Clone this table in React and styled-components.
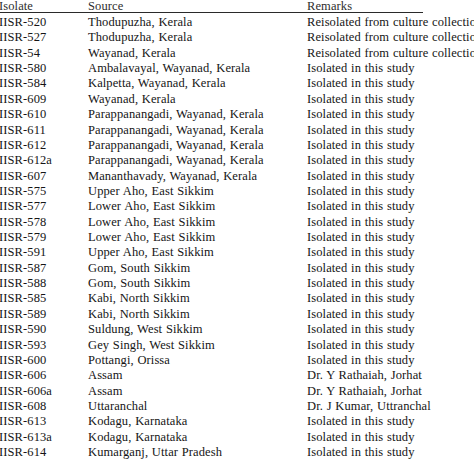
import React from 'react';
import styled, { createGlobalStyle } from 'styled-components';

const GlobalStyle = createGlobalStyle`
  html, body { margin: 0; padding: 0; background: #fff; }
  body { overflow: hidden; width: 474px; height: 459px; }
`;

const rows = [
  ['IISR-520', 'Thodupuzha, Kerala', 'Reisolated from culture collection'],
  ['IISR-527', 'Thodupuzha, Kerala', 'Reisolated from culture collection'],
  ['IISR-54', 'Wayanad, Kerala', 'Reisolated from culture collection'],
  ['IISR-580', 'Ambalavayal, Wayanad, Kerala', 'Isolated in this study'],
  ['IISR-584', 'Kalpetta, Wayanad, Kerala', 'Isolated in this study'],
  ['IISR-609', 'Wayanad, Kerala', 'Isolated in this study'],
  ['IISR-610', 'Parappanangadi, Wayanad, Kerala', 'Isolated in this study'],
  ['IISR-611', 'Parappanangadi, Wayanad, Kerala', 'Isolated in this study'],
  ['IISR-612', 'Parappanangadi, Wayanad, Kerala', 'Isolated in this study'],
  ['IISR-612a', 'Parappanangadi, Wayanad, Kerala', 'Isolated in this study'],
  ['IISR-607', 'Mananthavady, Wayanad, Kerala', 'Isolated in this study'],
  ['IISR-575', 'Upper Aho, East Sikkim', 'Isolated in this study'],
  ['IISR-577', 'Lower Aho, East Sikkim', 'Isolated in this study'],
  ['IISR-578', 'Lower Aho, East Sikkim', 'Isolated in this study'],
  ['IISR-579', 'Lower Aho, East Sikkim', 'Isolated in this study'],
  ['IISR-591', 'Upper Aho, East Sikkim', 'Isolated in this study'],
  ['IISR-587', 'Gom, South Sikkim', 'Isolated in this study'],
  ['IISR-588', 'Gom, South Sikkim', 'Isolated in this study'],
  ['IISR-585', 'Kabi, North Sikkim', 'Isolated in this study'],
  ['IISR-589', 'Kabi, North Sikkim', 'Isolated in this study'],
  ['IISR-590', 'Suldung, West Sikkim', 'Isolated in this study'],
  ['IISR-593', 'Gey Singh, West Sikkim', 'Isolated in this study'],
  ['IISR-600', 'Pottangi, Orissa', 'Isolated in this study'],
  ['IISR-606', 'Assam', 'Dr. Y Rathaiah, Jorhat'],
  ['IISR-606a', 'Assam', 'Dr. Y Rathaiah, Jorhat'],
  ['IISR-608', 'Uttaranchal', 'Dr. J Kumar, Uttranchal'],
  ['IISR-613', 'Kodagu, Karnataka', 'Isolated in this study'],
  ['IISR-613a', 'Kodagu, Karnataka', 'Isolated in this study'],
  ['IISR-614', 'Kumarganj, Uttar Pradesh', 'Isolated in this study'],
];

const Sheet = styled.div`
  width: 480px;
  margin-left: -1px;
  font-family: "Liberation Serif", "DejaVu Serif", serif;
  font-size: 12.5px;
  color: #151515;
  white-space: nowrap;
`;

const Row = styled.div`
  display: grid;
  grid-template-columns: 89px 219px 1fr;
  height: 15.37px;
  line-height: 16px;
  align-items: end;
`;

const HeadRow = styled(Row)`
  width: 424px;
  height: 12px;
  line-height: 11px;
  border-bottom: 1px solid #2a2a2a;
  margin-bottom: 1px;
  color: #2e2e2e;
`;

const Cell = styled.span`
  letter-spacing: 0.1px;
  word-spacing: 0.5px;
`;

export default function App() {
  return (
    <>
      <GlobalStyle />
      <Sheet>
        <HeadRow>
          <Cell>Isolate</Cell>
          <Cell>Source</Cell>
          <Cell>Remarks</Cell>
        </HeadRow>
        {rows.map(r => (
          <Row key={r[0]}>
            <Cell>{r[0]}</Cell>
            <Cell>{r[1]}</Cell>
            <Cell>{r[2]}</Cell>
          </Row>
        ))}
      </Sheet>
    </>
  );
}
